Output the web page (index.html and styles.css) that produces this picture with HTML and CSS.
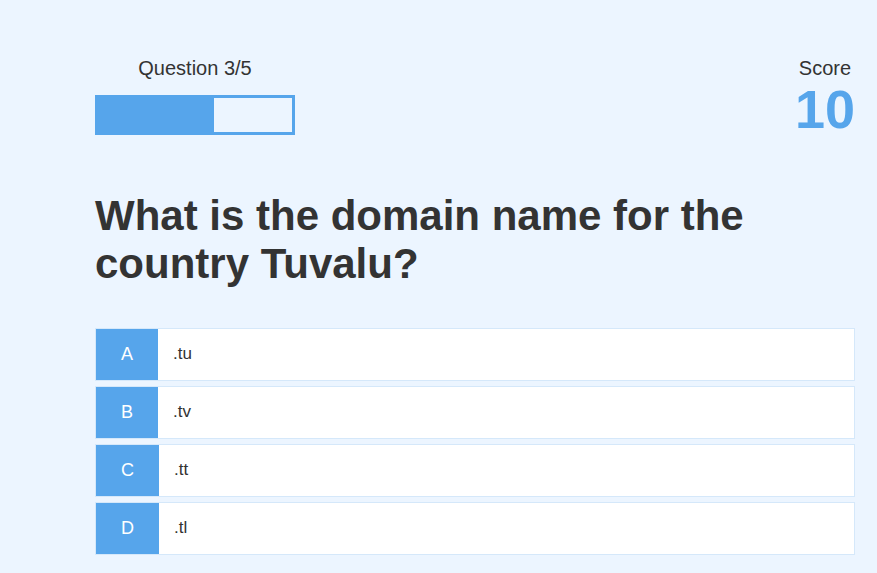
FILE: index.html
```html
<!DOCTYPE html>
<html lang="en">
<head>
    <meta charset="UTF-8">
    <meta name="viewport" content="width=device-width, initial-scale=1.0">
    <title>Quick Quiz - Play</title>
    <link rel="stylesheet" href="styles.css">
</head>
<body>
    <div class="container">
        <div id="game" class="justify-center flex-column">
            <div id="hud">
                <div id="hud-item">
                    <p id="progressText" class="hud-prefix">Question 3/5</p>
                    <div id="progressBar">
                        <div id="progressBarFull" style="width: 60%;"></div>
                    </div>
                </div>
                <div id="hud-item" class="hud-score">
                    <p class="hud-prefix">Score</p>
                    <h1 class="hud-main-text" id="score">10</h1>
                </div>
            </div>
            <h2 id="question">What is the domain name for the country Tuvalu?</h2>
            <div class="choice-container">
                <p class="choice-prefix">A</p>
                <p class="choice-text" data-number="1">.tu</p>
            </div>
            <div class="choice-container">
                <p class="choice-prefix">B</p>
                <p class="choice-text" data-number="2">.tv</p>
            </div>
            <div class="choice-container">
                <p class="choice-prefix">C</p>
                <p class="choice-text" data-number="3">.tt</p>
            </div>
            <div class="choice-container">
                <p class="choice-prefix">D</p>
                <p class="choice-text" data-number="4">.tl</p>
            </div>
        </div>
    </div>
</body>
</html>
```

FILE: styles.css
```css
* {
    box-sizing: border-box;
}
body {
    font-family: "Liberation Sans", Arial, sans-serif;
    background-color: #ecf5ff;
    color: #333;
    margin: 0;
    padding: 0;
}
.container {
    width: 760px;
    margin-left: 95px;
    padding-top: 57px;
}
p, h1, h2 {
    margin: 0;
}
#hud {
    display: flex;
    justify-content: space-between;
    align-items: flex-start;
}
.hud-prefix {
    text-align: center;
    font-size: 20px;
}
.hud-main-text {
    text-align: center;
    font-size: 54px;
    line-height: 58px;
    font-weight: bold;
    color: #56a5eb;
}
#progressBar {
    width: 200px;
    height: 40px;
    border: 3px solid #56a5eb;
    margin-top: 15px;
}
#progressBarFull {
    height: 100%;
    background-color: #56a5eb;
}
#question {
    font-size: 42px;
    font-weight: bold;
    margin: 54px 0 40px;
}
.choice-container {
    display: flex;
    margin-bottom: 5px;
    width: 100%;
    font-size: 18px;
    border: 1px solid rgba(86, 165, 235, 0.25);
    background-color: white;
}
.choice-prefix {
    padding: 15px 25px;
    background-color: #56a5eb;
    color: white;
}
.choice-text {
    padding: 15px;
    width: 100%;
    font-size: 17px;
}
```
